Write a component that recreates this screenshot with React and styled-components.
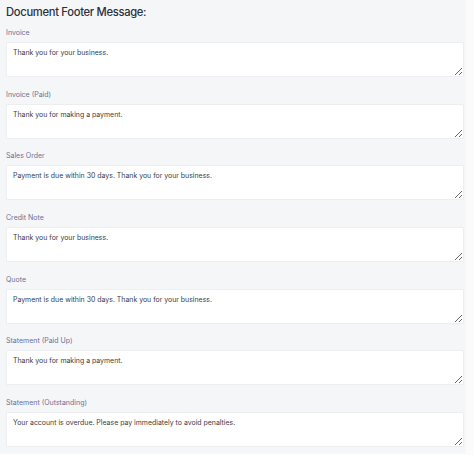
import React from "react";
import styled, { createGlobalStyle } from "styled-components";

const Global = createGlobalStyle`
  html, body { margin: 0; padding: 0; background: #fbfbfc; }
  * { box-sizing: border-box; }
`;

const Panel = styled.section`
  width: 466px;
  background: #f5f6f8;
  padding: 2px 2px 6px 6px;
  font-family: "Inter", "Open Sans", sans-serif;
  display: flex;
  flex-direction: column;
`;

const Title = styled.h2`
  margin: 0 0 5px 0;
  font-size: 11.2px;
  line-height: 20px;
  font-weight: 500;
  letter-spacing: -0.3px;
  color: #2b303b;
`;

const Fields = styled.div`
  display: flex;
  flex-direction: column;
  gap: 11.7px;
`;

const Field = styled.label`
  display: flex;
  flex-direction: column;
  gap: 3px;
`;

const Label = styled.span`
  font-size: 7px;
  line-height: 12px;
  color: #6e7096;
`;

const Area = styled.textarea`
  display: block;
  width: 458px;
  height: 35px;
  resize: vertical;
  border: 1px solid #eceef2;
  border-radius: 1px;
  background: #ffffff;
  padding: 4px 6px;
  font-family: "Inter", "Open Sans", sans-serif;
  font-size: 6.95px;
  line-height: 11px;
  color: #3a3d45;
  outline: none;
`;

const items = [
  ["Invoice", "Thank you for your business."],
  ["Invoice (Paid)", "Thank you for making a payment."],
  ["Sales Order", "Payment is due within 30 days. Thank you for your business."],
  ["Credit Note", "Thank you for your business."],
  ["Quote", "Payment is due within 30 days. Thank you for your business."],
  ["Statement (Paid Up)", "Thank you for making a payment."],
  ["Statement (Outstanding)", "Your account is overdue. Please pay immediately to avoid penalties."],
];

export default function App() {
  return (
    <>
      <Global />
      <Panel>
        <Title>Document Footer Message:</Title>
        <Fields>
          {items.map(([label, text]) => (
            <Field key={label}>
              <Label>{label}</Label>
              <Area defaultValue={text} />
            </Field>
          ))}
        </Fields>
      </Panel>
    </>
  );
}
